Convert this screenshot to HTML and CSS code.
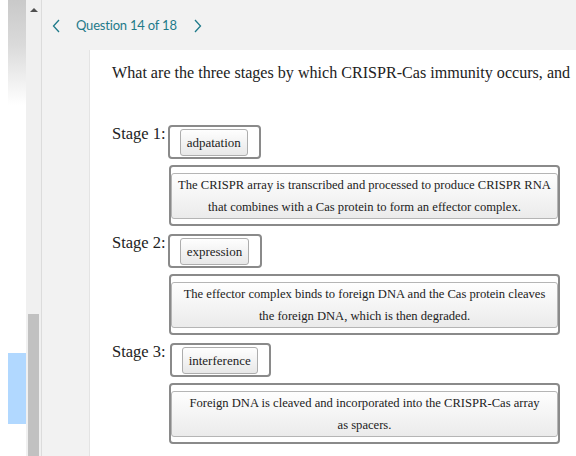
FILE: index.html
```html
<!DOCTYPE html>
<html>
<head>
<meta charset="utf-8">
<link rel="stylesheet" href="styles.css">
</head>
<body>
<div class="app">
  <div class="gutter"></div>
  <div class="side">
    <div class="side-mark"></div>
  </div>
  <div class="scrollbar">
    <div class="scroll-up"></div>
    <div class="scroll-thumb"></div>
  </div>
  <div class="main">
    <div class="header">
      <svg class="nav-arrow" width="8" height="14" viewBox="0 0 8 14"><path d="M7 1 L1.5 7 L7 13" fill="none" stroke="currentColor" stroke-width="1.3"/></svg>
      <span class="nav-title">Question 14 of 18</span>
      <svg class="nav-arrow" width="8" height="14" viewBox="0 0 8 14"><path d="M1 1 L6.5 7 L1 13" fill="none" stroke="currentColor" stroke-width="1.3"/></svg>
    </div>
    <div class="content">
      <p class="question">What are the three stages by which CRISPR-Cas immunity occurs, and</p>

      <div class="stage">
        <div class="stage-row">
          <span class="stage-label">Stage 1:</span>
          <div class="drop"><span class="chip">adpatation</span></div>
        </div>
        <div class="desc"><div class="desc-card">The CRISPR array is transcribed and processed to produce CRISPR RNA<br>that combines with a Cas protein to form an effector complex.</div></div>
      </div>

      <div class="stage">
        <div class="stage-row">
          <span class="stage-label">Stage 2:</span>
          <div class="drop"><span class="chip">expression</span></div>
        </div>
        <div class="desc"><div class="desc-card">The effector complex binds to foreign DNA and the Cas protein cleaves<br>the foreign DNA, which is then degraded.</div></div>
      </div>

      <div class="stage">
        <div class="stage-row">
          <span class="stage-label">Stage 3:</span>
          <div class="drop shifted"><span class="chip">interference</span></div>
        </div>
        <div class="desc"><div class="desc-card">Foreign DNA is cleaved and incorporated into the CRISPR-Cas array<br>as spacers.</div></div>
      </div>
    </div>
  </div>
</div>
</body>
</html>
```

FILE: styles.css
```css
html, body {
  margin: 0;
  padding: 0;
  width: 576px;
  height: 456px;
  overflow: hidden;
  background: #fff;
}
.app {
  display: flex;
  height: 456px;
}
.gutter {
  width: 8px;
  flex: none;
  background: #fff;
}
.side {
  width: 18px;
  flex: none;
  background: linear-gradient(#c9c9c9 0px, #dadada 45px, #fff 105px);
  display: flex;
  flex-direction: column;
}
.side-mark {
  margin-top: 353px;
  height: 71px;
  background: #b1d8ff;
}
.scrollbar {
  width: 15px;
  flex: none;
  background: #f0f0f0;
  display: flex;
  flex-direction: column;
  align-items: center;
}
.scroll-up {
  margin-top: 8px;
  width: 0;
  height: 0;
  border-left: 4px solid transparent;
  border-right: 4px solid transparent;
  border-bottom: 4px solid #505050;
}
.scroll-thumb {
  margin-top: 302px;
  width: 11px;
  flex: 1;
  background: #c1c1c1;
}
.main {
  flex: 1;
  display: flex;
  flex-direction: column;
  background: #f2f2f2;
  border-left: 1px solid #dcdcdc;
  min-width: 0;
}
.header {
  height: 50px;
  flex: none;
  display: flex;
  align-items: center;
  padding-left: 10px;
  font-family: "Lato", "Open Sans", sans-serif;
  color: #1f7a8a;
  font-size: 13px;
}
.nav-arrow {
  display: block;
  margin-top: 1px;
}
.nav-title {
  margin-left: 16px;
  margin-right: 17px;
  letter-spacing: -0.2px;
}
.content {
  flex: 1;
  margin-left: 47px;
  background: #fff;
  border-left: 1px solid #e4e4e4;
  padding-left: 22px;
  font-family: "Liberation Serif", "Times New Roman", serif;
  color: #222;
  overflow: hidden;
}
.question {
  margin: 14px 0 0 0;
  font-size: 16.1px;
  white-space: nowrap;
}
.stage {
  display: flex;
  flex-direction: column;
}
.stage-row {
  display: flex;
  align-items: flex-start;
  margin-top: 8px;
}
.stage:first-of-type .stage-row {
  margin-top: 43px;
}
.stage-label {
  font-size: 16.5px;
  line-height: 18px;
  margin-top: 0;
  margin-right: 2px;
}
.drop {
  box-sizing: border-box;
  height: 34px;
  border: 2px solid #8a8a8a;
  border-radius: 4px;
  padding: 2px 11px 1px 10px;
  display: flex;
}
.drop.shifted {
  margin-left: 2px;
}
.chip {
  box-sizing: border-box;
  height: 27px;
  line-height: 25px;
  font-size: 13px;
  padding: 0 6px;
  border: 1px solid #adadad;
  border-radius: 3px;
  background: linear-gradient(#fefefe, #e8e8e8);
  color: #222;
}
.desc {
  margin-left: 57px;
  margin-top: 6px;
  width: 391px;
  box-sizing: border-box;
  border: 2px solid #8a8a8a;
  border-radius: 4px;
  padding: 6px 0 5px 0;
}
.desc-card {
  border: 1px solid #b5b5b5;
  border-radius: 3px;
  background: linear-gradient(#fefefe, #ebebeb);
  text-align: center;
  font-size: 12.6px;
  line-height: 22px;
  color: #222;
}
```
